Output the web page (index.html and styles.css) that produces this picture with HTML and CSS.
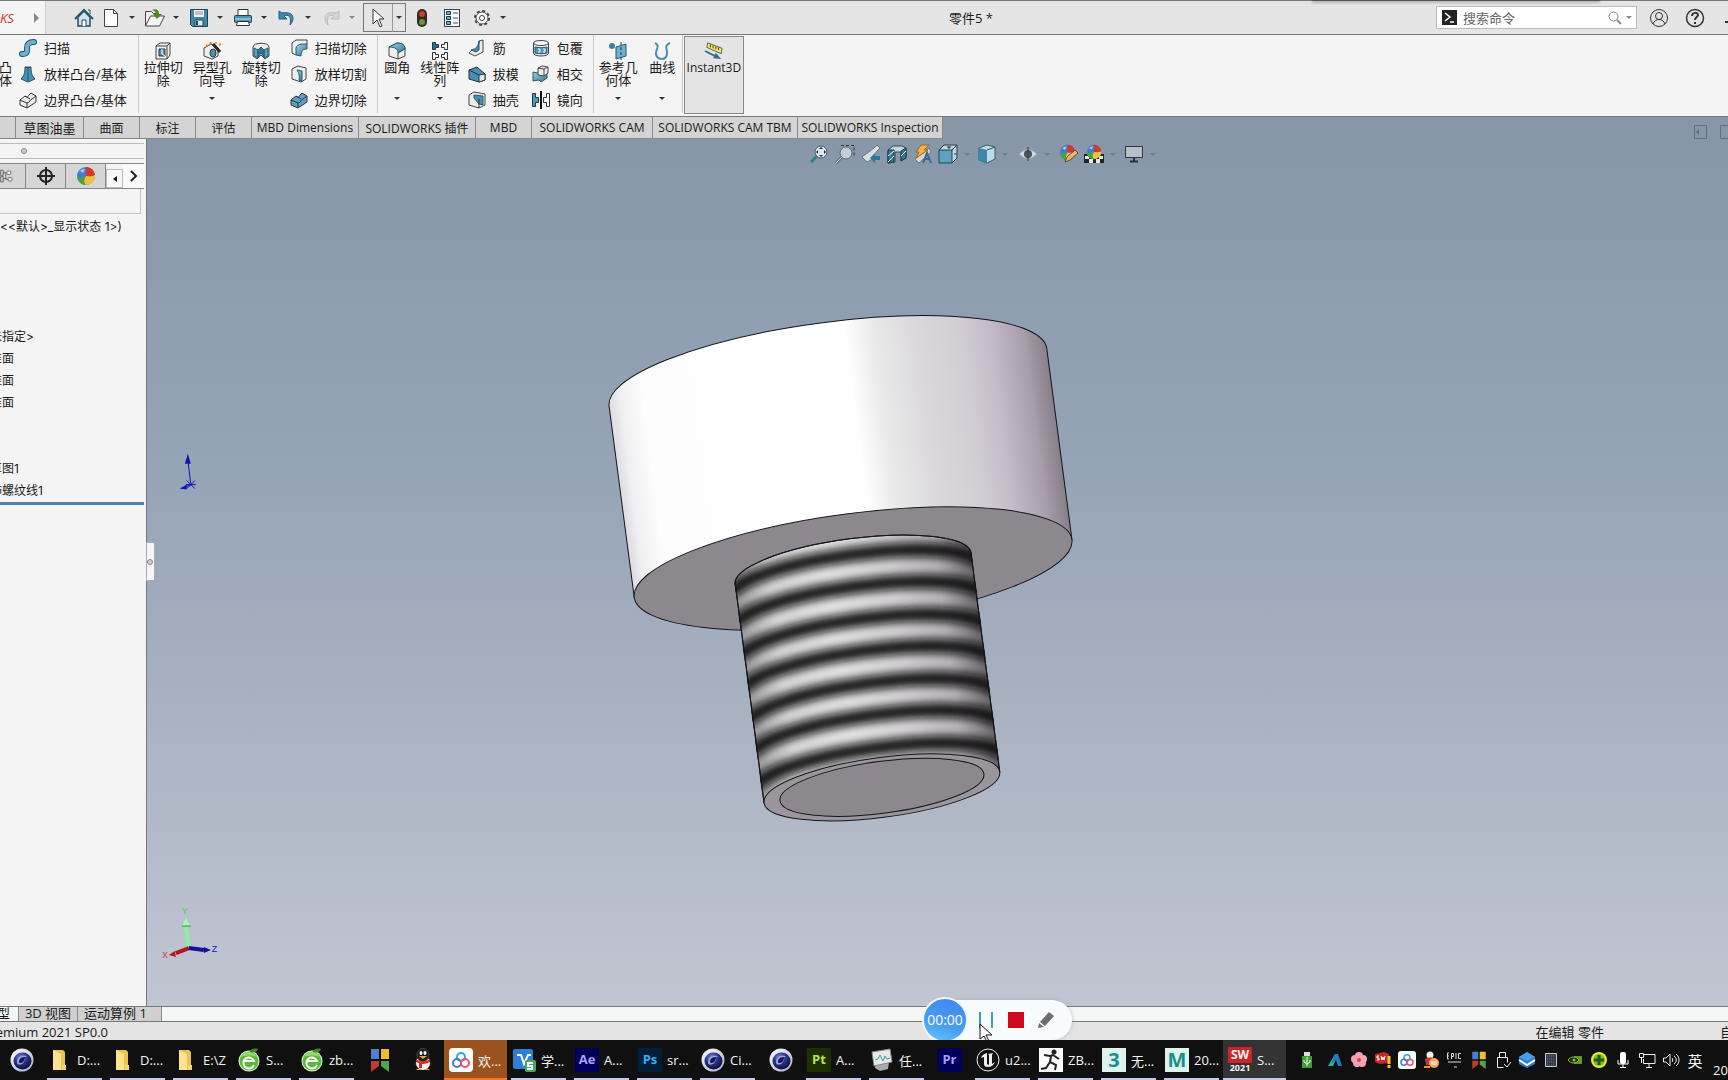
FILE: index.html
```html
<!DOCTYPE html>
<html lang="zh-CN">
<head>
  <meta charset="UTF-8">
  <title>零件5</title>
  <link rel="stylesheet" href="styles.css">
</head>
<body>

  <!-- Ícones usados mais de uma vez -->
  <svg class="sprite" aria-hidden="true">
    <defs>
      <radialGradient id="lens" cx="0.4" cy="0.3" r="0.7">
        <stop offset="0" stop-color="#7c8cd8"/>
        <stop offset="0.5" stop-color="#2a3488"/>
        <stop offset="1" stop-color="#0b1038"/>
      </radialGradient>
      <linearGradient id="chrome" x1="0" y1="0" x2="1" y2="1">
        <stop offset="0" stop-color="#ffffff"/>
        <stop offset="1" stop-color="#a4abc8"/>
      </linearGradient>
      <linearGradient id="blue" x1="0" y1="0" x2="1" y2="1">
        <stop offset="0" stop-color="#a9d3e6"/>
        <stop offset="1" stop-color="#2c7396"/>
      </linearGradient>
    </defs>
    <symbol id="i-c4d" viewBox="0 0 24 24">
      <circle cx="12" cy="12" r="11.500" fill="url(#chrome)"/>
      <ellipse cx="12.500" cy="13" rx="9" ry="8.500" fill="url(#lens)"/>
      <path d="M7 14c0-5 4-7 10-6-3 2-2 6-5 8-3 1-5 1-5-2z" fill="#9aa3de"/>
      <path d="M9 14c0-4 3-5 7-5-2 2-2 6-5 6-1 0-2 0-2-1z" fill="#141a58"/>
    </symbol>
    <symbol id="i-folder" viewBox="0 0 20 24">
      <path d="M3 2h10l2 2v18H3z" fill="#e9c25c"/>
      <path d="M3 2l8 4v16H3z" fill="#fde58e"/>
      <path d="M12 17h4v5h-4z" fill="#f5d477"/>
    </symbol>
    <symbol id="i-browser" viewBox="0 0 24 24">
      <circle cx="12" cy="13" r="10.500" fill="#e4f5da"/>
      <circle cx="12" cy="13" r="9.500" fill="#5ab83a"/>
      <path d="M4 9c3-6 12-7 16 0-5-2-11-2-16 0z" fill="#8fdc68"/>
      <path d="M13 3c1-2 4-3 8-2-1 3-4 4-8 3z" fill="#3b8c28"/>
      <path d="M17 17a5.500 5.500 0 1 1 0-4H7" fill="none" stroke="#fff" stroke-width="2"/>
    </symbol>
    <symbol id="i-cards" viewBox="0 0 20 24">
      <path d="M1 1h8v10H1z" fill="#4b7fd6"/>
      <path d="M11 1h8v10h-8z" fill="#f1bd2e"/>
      <path d="M1 13h8v5l-8 6z" fill="#c5392f"/>
      <path d="M11 13h8v11l-8-6z" fill="#4fa447"/>
    </symbol>
    <symbol id="i-cloud" viewBox="0 0 24 24">
      <rect width="24" height="24" rx="4" fill="#fff"/>
      <circle cx="12" cy="9" r="4" fill="none" stroke="#29a7ee" stroke-width="2"/>
      <circle cx="8" cy="15" r="4" fill="none" stroke="#3c7be8" stroke-width="2"/>
      <circle cx="16" cy="15" r="4" fill="none" stroke="#ea5468" stroke-width="2"/>
    </symbol>
    <symbol id="i-ball" viewBox="0 0 20 20">
      <circle cx="10" cy="10" r="9" fill="#3f7fd0"/>
      <path d="M10 10V1a9 9 0 0 1 9 8c-3 1-6 2-9 1z" fill="#d8352c"/>
      <path d="M10 10c4 1 7 0 9-1a9 9 0 0 1-9 10c-3-3-2-6 0-9z" fill="#efc437"/>
      <path d="M10 10c-2 3-3 6 0 9a9 9 0 0 1-9-8c3 1 6 0 9-1z" fill="#4da143"/>
      <path d="M4 5c2-2 4-2 5-2L7 7z" fill="#fff" opacity="0.600"/>
    </symbol>
    <symbol id="i-surface" viewBox="0 0 18 18">
      <path d="M1 9l5-4c2 2 3 1 4-1l2-2 5 3v6l-9 6-7-3z" stroke="#333" stroke-linejoin="round"/>
      <path d="M1 9l7 3c3 0 3-4 5-4l4-3M8 12v5M6 5l5 3" fill="none" stroke="#333"/>
    </symbol>
  </svg>

  <header class="titlebar">
    <div class="shadow-strip"></div>
    <div class="brand"><span class="brand-name">KS</span><span class="brand-arrow"></span></div>
    <nav class="quick">
      <button class="qbtn" aria-label="主页"><svg width="20" height="20" viewBox="0 0 20 20"><path d="M4 9v9h12V9l-6-6z" fill="#cfe2ec" stroke="#274a5e" stroke-width="1.500"/><path d="M1 11l9-9 9 9" fill="none" stroke="#27556f" stroke-width="2"/><path d="M8 18v-6h4v6M14 2h2v4" fill="#fff" stroke="#274a5e"/></svg></button>
      <div class="split"><button class="qbtn" aria-label="新建"><svg width="20" height="20" viewBox="0 0 20 20"><path d="M3.500 1.500h9l4 4v13h-13z" fill="#fdfdfd" stroke="#444"/><path d="M12.500 1.500v4h4" fill="none" stroke="#444"/></svg></button><button class="caret" aria-label="更多"></button></div>
      <div class="split"><button class="qbtn" aria-label="打开"><svg width="22" height="20" viewBox="0 0 22 20"><path d="M1.500 18V3.500h6l2 2h5V8" fill="#eee" stroke="#444"/><path d="M1.500 18l5-10h14l-5 10z" fill="#f6f6f2" stroke="#444"/><path d="M8 2c4-2 7 0 7 4h3l-5 5-4-5h3c0-2-1-3-4-4z" fill="#4b8a1c"/></svg></button><button class="caret" aria-label="更多"></button></div>
      <div class="split"><button class="qbtn" aria-label="保存"><svg width="20" height="20" viewBox="0 0 20 20"><path d="M1.500 1.500h17v17h-15l-2-2z" fill="#3f86a8" stroke="#1f4255"/><path d="M5 2h10v7H5z" fill="#f3f6f8"/><path d="M6 4h8M6 6h8" stroke="#889"/><path d="M6 12h8v6H6z" fill="#dfe8ec" stroke="#1f4255"/><path d="M8 13v4" stroke="#1f4255" stroke-width="2"/></svg></button><button class="caret" aria-label="更多"></button></div>
      <div class="split"><button class="qbtn" aria-label="打印"><svg width="20" height="20" viewBox="0 0 20 20"><path d="M5 8V1.500h10V8" fill="#fff" stroke="#333"/><rect x="1.500" y="7.500" width="17" height="7" rx="1" fill="#4b94b6" stroke="#1f4255"/><path d="M2 11h16" stroke="#cfe6f0"/><path d="M4.500 13.500h11l1 4h-13z" fill="#fff" stroke="#333"/></svg></button><button class="caret" aria-label="更多"></button></div>
      <div class="split"><button class="qbtn" aria-label="撤消"><svg width="20" height="20" viewBox="0 0 20 20"><path d="M2 3v8h8L7 8c4-2 8 0 6 9 6-7 3-14-8-12z" fill="#3f8cb0" stroke="#235b78" stroke-linejoin="round"/></svg></button><button class="caret" aria-label="更多"></button></div>
      <div class="split"><button class="qbtn" aria-label="重做"><svg width="20" height="20" viewBox="0 0 20 20"><path d="M18 3v8h-8l3-3c-4-2-8 0-6 9-6-7-3-14 8-12z" fill="#d5d5d5" stroke="#bbb" stroke-linejoin="round"/></svg></button><button class="caret dim" aria-label="更多"></button></div>
      <div class="split boxed"><button class="qbtn" aria-label="选择"><svg width="18" height="20" viewBox="0 0 18 20"><path d="M4 1v15l4-4 3 7 2-1-3-7h5z" fill="#fff" stroke="#333" stroke-linejoin="round"/></svg></button><button class="caret" aria-label="更多"></button></div>
    </nav>
    <div class="quick tail">
      <button class="qbtn" aria-label="重建"><svg width="12" height="20" viewBox="0 0 12 20"><rect x="1" y="1" width="10" height="18" rx="5" fill="#332b26"/><circle cx="6" cy="6" r="3" fill="#d13c25"/><circle cx="6" cy="14" r="3" fill="#5c9a44"/></svg></button>
      <button class="qbtn" aria-label="文件属性"><svg width="18" height="20" viewBox="0 0 18 20"><rect x="1.500" y="1.500" width="15" height="17" fill="#fafafa" stroke="#345"/><path d="M3.500 3.500h4v3h-4zM3.500 8.500h4v3h-4zM3.500 13.500h4v3h-4z" fill="#6fb4d4" stroke="#234"/><path d="M10 5h5M10 10h5M10 15h5" stroke="#456"/></svg></button>
      <button class="qbtn" aria-label="选项"><svg width="18" height="18" viewBox="0 0 18 18"><circle cx="9" cy="9" r="7" fill="none" stroke="#444" stroke-width="2" stroke-dasharray="3 2.500"/><circle cx="9" cy="9" r="6" fill="#f4f4f4" stroke="#555"/><circle cx="9" cy="9" r="2.500" fill="#fff" stroke="#444"/></svg></button>
      <button class="caret tight" aria-label="更多"></button>
    </div>
    <h1 class="doc-title">零件5 *</h1>
    <div class="search">
      <svg width="15" height="15" viewBox="0 0 15 15"><rect width="15" height="15" fill="#222"/><path d="M3 3l5 4-5 4M8 12h4" fill="none" stroke="#fff" stroke-width="1.500"/></svg>
      <input type="text" placeholder="搜索命令" aria-label="搜索命令">
      <svg width="14" height="14" viewBox="0 0 14 14"><circle cx="5.500" cy="5.500" r="4.500" fill="none" stroke="#888"/><path d="M9 9l4 4" stroke="#888" stroke-width="2"/></svg>
      <button class="caret dim" aria-label="更多"></button>
    </div>
    <div class="account">
      <button class="qbtn" aria-label="登录"><svg width="20" height="20" viewBox="0 0 20 20" fill="none" stroke="#333"><circle cx="10" cy="10" r="8.500"/><circle cx="10" cy="8" r="3.500"/><path d="M4 16c2-6 10-6 12 0"/></svg></button>
      <button class="qbtn" aria-label="帮助"><svg width="20" height="20" viewBox="0 0 20 20" fill="none" stroke="#333"><circle cx="10" cy="10" r="8.500" stroke-width="1.500"/><path d="M7 8c0-4 6-4 6-1 0 2-3 2-3 5M10 14v2" stroke-width="2"/></svg></button>
      <button class="minimize" aria-label="最小化"></button>
    </div>
  </header>

  <section class="ribbon">
    <div class="big cut"><span class="label">凸<br>体</span></div>
    <div class="stack first">
      <button><svg width="18" height="18" viewBox="0 0 18 18"><path d="M3 15c6 0 5-3 5-6s1-6 7-6" fill="none" stroke="#23556f" stroke-width="6" stroke-linecap="round"/><path d="M3 15c6 0 5-3 5-6s1-6 7-6" fill="none" stroke="#6fb0cf" stroke-width="4" stroke-linecap="round"/></svg>扫描</button>
      <button><svg width="18" height="18" viewBox="0 0 18 18"><path d="M6 2h6c0 6 1 9 4 12l-7 3-7-3c3-3 4-6 4-12z" fill="#4a8fb0" stroke="#24586f"/><path d="M6 2l3 1 3-1M9 3v13" fill="none" stroke="#24586f"/></svg>放样凸台/基体</button>
      <button><svg width="18" height="18" fill="#ececec"><use href="#i-surface"/></svg>边界凸台/基体</button>
    </div>
    <div class="sep"></div>
    <button class="big"><svg width="18" height="18" viewBox="0 0 18 18"><path d="M2 4l4-3h10v12l-3 4H2z" fill="#eee" stroke="#444"/><path d="M2 4h11v13M13 4l3-3" fill="none" stroke="#444"/><path d="M5 7h6v7H5z" fill="#4994b8" stroke="#333"/><path d="M8 7v5l3 2" fill="none" stroke="#fff"/></svg><span class="label">拉伸切除</span></button>
    <button class="big"><svg width="20" height="18" viewBox="0 0 20 18"><path d="M2 6l7-4 7 4v8l-6 3-8-3z" fill="#eee" stroke="#444"/><ellipse cx="11" cy="11" rx="3" ry="4" fill="#4994b8" stroke="#333"/><path d="M11 2l7 8" stroke="#222" stroke-width="3"/><path d="M8 2l1-2M13 1l2-1M17 3l2-1M6 4L4 3" stroke="#e88a2c" stroke-width="2"/></svg><span class="label">异型孔向导</span><i class="drop"></i></button>
    <button class="big"><svg width="20" height="18" viewBox="0 0 20 18"><path d="M2 5c0-5 16-5 16 0v9l-4 3-4-4-4 4-4-3z" fill="#eee" stroke="#444"/><path d="M3 6l4 2v8l-4-2zM17 6l-4 2v8l4-2z" fill="#5ba2c4" stroke="#24586f"/><path d="M7 8l3-3 3 3v7l-3-4-3 4z" fill="#2f7698" stroke="#24586f"/></svg><span class="label">旋转切除</span></button>
    <div class="stack cuts">
      <button><svg width="18" height="18" viewBox="0 0 18 18"><path d="M2 4l4-3h11v4L6 16l-4-2z" fill="#eee" stroke="#444"/><path d="M6 16V9c1-4 5-4 11-4v5c-4 0-6 2-6 7z" fill="url(#blue)" stroke="#24586f"/></svg>扫描切除</button>
      <button><svg width="18" height="18" viewBox="0 0 18 18"><path d="M2 4l6-3 8 2v11l-5 3-9-3z" fill="#eee" stroke="#444"/><path d="M7 5l5 1v11l-3-2c1-3 0-7-2-10z" fill="url(#blue)" stroke="#24586f"/></svg>放样切割</button>
      <button><svg width="18" height="18" fill="#5ba2c4"><use href="#i-surface"/></svg>边界切除</button>
    </div>
    <div class="sep"></div>
    <button class="big narrow"><svg width="20" height="18" viewBox="0 0 20 18"><path d="M2 5l8-4c5 0 8 2 8 6v7l-7 3-9-3z" fill="#eee" stroke="#444"/><path d="M10 1c5 0 8 2 8 6l-7 4c0-4-3-6-9-6z" fill="url(#blue)" stroke="#24586f"/><path d="M11 11v6" stroke="#444"/></svg><span class="label">圆角</span><i class="drop"></i></button>
    <button class="big mid"><svg width="20" height="18" viewBox="0 0 20 18"><path d="M2.500 0.500h3v2h3v3h-3v2h-3z" fill="#2f6f90" stroke="#234"/><path d="M17.500 0.500h-3v2h-3v3h3v2h3zM2.500 10.500h3v2h3v3h-3v2h-3zM17.500 10.500h-3v2h-3v3h3v2h3z" fill="#fafafa" stroke="#333"/></svg><span class="label">线性阵列</span><i class="drop"></i></button>
    <div class="stack features">
      <button><svg width="18" height="18" viewBox="0 0 18 18"><path d="M11 2l4-1v12l-8 4-6-3 3-3h5z" fill="#eee" stroke="#444"/><path d="M11 2c0 5-3 8-8 9l5 2 3-2z" fill="url(#blue)" stroke="#24586f"/></svg>筋</button>
      <button><svg width="18" height="18" viewBox="0 0 18 18"><path d="M1 5l8-3 8 7v6l-6 2-10-3z" fill="#4a8fb0" stroke="#234"/><path d="M11 10l6-1v6l-6 2z" fill="#d9eaf2" stroke="#333"/><path d="M1 5l10 5" stroke="#234"/></svg>拔模</button>
      <button><svg width="18" height="18" viewBox="0 0 18 18"><path d="M1 4l5-3 11 2v11l-6 3L1 14z" fill="#eee" stroke="#444"/><path d="M6 4l9 1v9l-4-1-5-6z" fill="#4a8fb0" stroke="#24586f"/><path d="M11 8v9" stroke="#333"/></svg>抽壳</button>
    </div>
    <div class="stack wraps">
      <button><svg width="18" height="18" viewBox="0 0 18 18"><path d="M1.500 4v10c0 4 15 4 15 0V4" fill="#eee" stroke="#444"/><ellipse cx="9" cy="4" rx="7.500" ry="2.500" fill="#fafafa" stroke="#444"/><path d="M3 8c4 1 8 1 12 0v6c-4 1-8 1-12 0z" fill="#4d98bb" stroke="#24586f"/><path d="M6 10h2v3H6M11 10h2v3h-2" fill="none" stroke="#fff"/></svg>包覆</button>
      <button><svg width="18" height="18" viewBox="0 0 18 18"><path d="M1 7l9 2 5-3v7l-6 4-2-2-6 1z" fill="url(#blue)" stroke="#24586f"/><path d="M6 3l4-2 6 1v6l-4 3-6-1z" fill="#eee" stroke="#444"/><path d="M6 3l6 1v7M12 4l4-2" fill="none" stroke="#444"/></svg>相交</button>
      <button><svg width="18" height="18" viewBox="0 0 18 18"><path d="M0.500 2.500h3v4h3v5h-3v4h-3z" fill="#4d98bb" stroke="#234"/><path d="M17.500 2.500h-3v4h-3v5h3v4h3z" fill="#fafafa" stroke="#333"/><path d="M9 0v18" stroke="#111" stroke-width="2"/></svg>镜向</button>
    </div>
    <div class="sep"></div>
    <button class="big"><svg width="20" height="18" viewBox="0 0 20 18"><circle cx="4" cy="4" r="3" fill="#3d7f9f"/><path d="M8 5l10-3v12L8 17z" fill="#6fb0cf" stroke="#24586f"/><path d="M13 0v18" stroke="#234" stroke-dasharray="3 2"/></svg><span class="label">参考几何体</span><i class="drop"></i></button>
    <button class="big narrow"><svg width="20" height="18" viewBox="0 0 20 18"><path d="M3 1c6 3 0 7 1 11 1 6 10 7 11 0 1-5-4-8 3-11" fill="none" stroke="#4c8fae" stroke-width="2"/></svg><span class="label">曲线</span><i class="drop"></i></button>
    <div class="sep"></div>
    <button class="big instant"><svg width="22" height="18" viewBox="0 0 22 20"><path d="M4 1l16 6-1 6L3 6z" fill="#f5e36b" stroke="#554"/><path d="M7 3v3M10 4v3M13 5v3M16 6v3" stroke="#332"/><path d="M1 10l12 6" stroke="#2f6f90" stroke-width="2"/><path d="M13 12l6 7-9-1z" fill="#2f6f90"/></svg><span class="label">Instant3D</span></button>
  </section>

  <div class="workspace">
    <nav class="tabs">
      <button class="w-edge"></button>
      <button class="w-wide">草图油墨</button>
      <button class="w-short">曲面</button>
      <button class="w-short">标注</button>
      <button class="w-short">评估</button>
      <button class="w-dim">MBD Dimensions</button>
      <button class="w-addin">SOLIDWORKS 插件</button>
      <button class="w-short">MBD</button>
      <button class="w-cam">SOLIDWORKS CAM</button>
      <button class="w-tbm">SOLIDWORKS CAM TBM</button>
      <button class="w-tbm">SOLIDWORKS Inspection</button>
      <div class="doc-controls">
        <svg width="13" height="14" viewBox="0 0 13 14"><path d="M0.500 0.500h12v13H0.500z" fill="none" stroke="#5f7083"/><path d="M5 4v6L2 7z" fill="#5f7083"/></svg>
        <svg width="13" height="14" viewBox="0 0 13 14"><path d="M0.500 0.500h12v13H0.500z" fill="none" stroke="#5f7083"/></svg>
      </div>
    </nav>

    <div class="main">
      <aside class="panel">
        <div class="grip"><i></i></div>
        <div class="panel-tabs">
          <button class="pt-first" aria-label="配置"><svg width="20" height="20" viewBox="0 0 20 20" fill="none" stroke="#333"><path d="M1 1h4v8H1zM1 11h4v8H1zM5 5h5M5 14h4M9 5v10h4"/><rect x="10.500" y="2.500" width="6" height="5" rx="1" fill="#fff"/><rect x="12.500" y="12.500" width="6" height="5" rx="1" fill="#fff"/></svg></button>
          <button aria-label="尺寸"><svg width="18" height="18" viewBox="0 0 18 18" fill="none" stroke="#222" stroke-width="2"><circle cx="9" cy="9" r="6"/><path d="M9 0v18M0 9h18"/></svg></button>
          <button aria-label="外观"><svg width="20" height="20"><use href="#i-ball"/></svg></button>
          <button class="pt-back" aria-label="上一个"></button>
          <button class="pt-next" aria-label="下一个"><svg width="8" height="12" viewBox="0 0 8 12"><path d="M1 1l5 5-5 5" fill="none" stroke="#222" stroke-width="2"/></svg></button>
        </div>
        <div class="filter"></div>
        <ul class="tree">
          <li class="root">&lt;&lt;默认&gt;_显示状态 1&gt;)</li>
          <li></li><li></li><li></li><li></li>
          <li>未指定&gt;</li>
          <li>准面</li>
          <li>准面</li>
          <li>准面</li>
          <li></li><li></li>
          <li>草图1</li>
          <li>饰螺纹线1</li>
        </ul>
        <div class="rollback"></div>
      </aside>

      <div class="viewport">
        <button class="collapse" aria-label="折叠"><i></i></button>

        <!-- Peça: cabeça cilíndrica e haste com rosca -->
        <svg class="model" viewBox="147 138 1581 868" preserveAspectRatio="xMidYMid meet">
          <defs>
            <linearGradient id="head" x1="-222" x2="222" y1="0" y2="0" gradientUnits="userSpaceOnUse">
              <stop offset="0" stop-color="#dcdadd"/>
              <stop offset="0.030" stop-color="#f0eff1"/>
              <stop offset="0.080" stop-color="#fdfdfd"/>
              <stop offset="0.550" stop-color="#ffffff"/>
              <stop offset="0.610" stop-color="#ebebeb"/>
              <stop offset="0.700" stop-color="#dcdadd"/>
              <stop offset="0.810" stop-color="#d2cdd4"/>
              <stop offset="0.870" stop-color="#c6bcca"/>
              <stop offset="0.950" stop-color="#a79dab"/>
              <stop offset="1" stop-color="#857d86"/>
            </linearGradient>
            <linearGradient id="shank" x1="-120" x2="120" y1="0" y2="0" gradientUnits="userSpaceOnUse">
              <stop offset="0" stop-color="#a4a4a4"/>
              <stop offset="0.150" stop-color="#dadada"/>
              <stop offset="0.400" stop-color="#e6e6e6"/>
              <stop offset="0.650" stop-color="#d6d4d6"/>
              <stop offset="0.850" stop-color="#bcb5bd"/>
              <stop offset="1" stop-color="#6f6a70"/>
            </linearGradient>
            <clipPath id="shank-clip"><path d="M-120 0A120 30 0 0 1 120 0V222A120 30 0 0 0 -120 222z"/></clipPath>
            <filter id="soft" filterUnits="userSpaceOnUse" x="-150" y="-60" width="300" height="320"><feGaussianBlur stdDeviation="5"/></filter>
            <path id="thread" d="M-126 12A126 26 0 0 1 126 12"/>
          </defs>
          <g transform="translate(853 568) rotate(-7.500)" stroke="#15151a">
            <path d="M-221 -193A221 55 0 0 1 221 -193V0H-221z" fill="url(#head)"/>
            <ellipse rx="221" ry="55" fill="#8d888e"/>
            <path d="M-119 0A119 30 0 0 1 119 0V221H-119z" fill="url(#shank)"/>
            <g clip-path="url(#shank-clip)">
              <g fill="none" stroke="#101010" stroke-width="14" filter="url(#soft)">
                <use href="#thread"/>
                <use href="#thread" y="32"/>
                <use href="#thread" y="65"/>
                <use href="#thread" y="97"/>
                <use href="#thread" y="130"/>
                <use href="#thread" y="162"/>
                <use href="#thread" y="195"/>
              </g>
            </g>
            <path d="M-119 221V0A119 30 0 0 1 119 0V221" fill="none"/>
            <ellipse cy="221" rx="119" ry="30" fill="#9a969b"/>
            <ellipse cy="221" rx="103" ry="26" fill="#8d888e"/>
          </g>
          <!-- Origem do esboço -->
          <g stroke="#1212b4" fill="#1212b4">
            <path d="M190 484l-3-24M190 484l-10 4M186 480l8 8M194 480l-8 8M185 484h10" fill="none"/>
            <path d="M187 453l3 10h-6zM179 488l7-4v5z" stroke="none"/>
          </g>
          <!-- Tríade de eixos -->
          <path d="M188 948l-3-22" stroke="#8df0a0" stroke-width="4"/>
          <path d="M185 918l5 9h-9z" fill="#a8f5b5"/>
          <path d="M181 926h9" stroke="#2c8a3c"/>
          <path d="M188 948l-13 5" stroke="#b3141c" stroke-width="4"/>
          <path d="M168 955l6-4 1 6z" fill="#b3141c"/>
          <path d="M188 948l15 2" stroke="#10109a" stroke-width="4"/>
          <path d="M210 950l-7-3v6z" fill="#10109a"/>
          <g class="axis">
            <text x="181" y="914" fill="#4fc468">Y</text>
            <text x="161" y="958" fill="#cf3b46">X</text>
            <text x="211" y="952" fill="#1a1aa8">Z</text>
          </g>
        </svg>

        <div class="hud">
          <button aria-label="整屏显示"><svg width="20" height="20" viewBox="0 0 20 20"><path d="M2 18l7-7" stroke="#2d7f93" stroke-width="3"/><circle cx="12" cy="8" r="6" fill="#dbe6ee" stroke="#45586a"/><path d="M12 3l2 2h-4zM12 13l2-2h-4zM7 8l2-2v4zM17 8l-2-2v4z" fill="#234"/></svg></button>
          <button aria-label="局部放大"><svg width="20" height="20" viewBox="0 0 20 20"><path d="M6 1.500h13v12" fill="none" stroke="#333" stroke-dasharray="3 2"/><path d="M1 19l7-7" stroke="#4e7f92" stroke-width="3"/><path d="M1 19l7-7" stroke="#b4cad4"/><circle cx="11" cy="9" r="6" fill="#c3ced8" stroke="#56687a"/></svg></button>
          <button aria-label="上一视图"><svg width="20" height="20" viewBox="0 0 20 20"><path d="M1 13L13 4l3-3 3 3-3 3-6 9-4 2z" fill="#d8dde0" stroke="#6b7680"/><path d="M9 14l5-5v3h5v4h-5v3z" fill="#32739a"/></svg></button>
          <button aria-label="剖面视图"><svg width="20" height="20" viewBox="0 0 20 20"><path d="M1 6l5-4h9l4 2v9l-5 4V8H8v10l-7 1z" fill="#c8d6de" stroke="#345"/><path d="M1 6h6v12l-6 1zM14 7l5-3v10l-5 3z" fill="#2e7c8c" stroke="#234"/><path d="M1 12l6-5M1 18l6-6M14 12l5-5" stroke="#dfe"/></svg></button>
          <button aria-label="动态注解"><svg width="20" height="20" viewBox="0 0 20 20"><path d="M2 15L16 4l2 4-12 11z" fill="#d6d6cc" stroke="#777"/><path d="M8 1h8l-5 5h4L3 14l3-6H3z" fill="#f0b348" stroke="#9a6b1e"/><path d="M10 19l4-10 4 10M12 15h5" fill="none" stroke="#3d6698" stroke-width="2"/></svg></button>
          <button class="gap-c" aria-label="视图定向"><svg width="20" height="20" viewBox="0 0 20 20"><path d="M1 6l5-5h13v13l-5 5" fill="#c3d3dc" stroke="#2b3a48"/><path d="M1 6h13v13H1z" fill="#5ba2bd" stroke="#1f4658"/><path d="M14 6l5-5M16 10h3M11 2v3M9 3h4" stroke="#2b3a48"/></svg><i class="faint"></i></button>
          <button class="gap-c" aria-label="显示样式"><svg width="18" height="20" viewBox="0 0 18 20"><path d="M1 4l8-3 8 2v12l-8 4-8-3z" fill="#bcdbe6" stroke="#345c70"/><path d="M1 4l8 2v13l-8-3z" fill="#3b89a6"/><path d="M9 6l8-3" stroke="#345c70"/></svg><i class="faint"></i></button>
          <button class="gap-c" aria-label="隐藏"><svg width="20" height="20" viewBox="0 0 20 20"><path d="M1 10c5-6 13-6 18 0-5 6-13 6-18 0z" fill="#d3dade" stroke="#9aa6b0"/><circle cx="10" cy="10" r="4" fill="#47525c"/><path d="M10 3v5M10 12v5" stroke="#333"/></svg><i class="faint"></i></button>
          <button aria-label="编辑外观"><svg width="20" height="20" viewBox="0 0 20 20"><use href="#i-ball" width="17" height="17"/><path d="M6 18l2-5 8-7 3 3-8 7z" fill="#e9b57d" stroke="#6b4a28"/></svg></button>
          <button class="gap-c" aria-label="应用布景"><svg width="20" height="20" viewBox="0 0 20 20"><path d="M0 10h20v9H0z" fill="#222"/><path d="M1 12h4v3H1zM15 12h4v3h-4zM5 15h4v4H5zM12 15h4v4h-4z" fill="#e8e8e8"/><use href="#i-ball" x="2" width="16" height="16"/></svg><i class="faint"></i></button>
          <button class="gap-c" aria-label="视图设定"><svg width="20" height="20" viewBox="0 0 20 20"><path d="M1.500 2.500h17v11h-17z" fill="#b6c0ca" stroke="#333"/><path d="M10 14v3M6 17.500h8" stroke="#234" stroke-width="2"/></svg><i class="faint"></i></button>
        </div>
      </div>
    </div>
  </div>

  <div class="sheet-tabs">
    <button class="active">型</button>
    <button class="s-view">3D 视图</button>
    <button class="s-motion">运动算例 1</button>
  </div>

  <footer class="status">
    <span class="version">Premium 2021 SP0.0</span>
    <span class="mode">在编辑 零件</span>
    <span class="unit">自</span>

    <div class="recorder">
      <span class="clock">00:00</span>
      <button class="pause" aria-label="暂停"></button>
      <button class="stop" aria-label="停止"></button>
      <button class="pen" aria-label="画笔"><svg width="18" height="18" viewBox="0 0 18 18" fill="#6e6e70"><path d="M12 1l5 4-9 10-5-4zM2 12l5 4-6 1z"/></svg></button>
      <svg class="pointer" width="14" height="20" viewBox="0 0 14 20"><path d="M1 1v15l4-3 3 6 2-1-3-6h6z" fill="#fff" stroke="#111"/></svg>
    </div>
  </footer>

  <nav class="taskbar">
    <button class="app solo"><svg width="24" height="24"><use href="#i-c4d"/></svg></button>
    <button class="app open"><svg width="20" height="24"><use href="#i-folder"/></svg><span>D:...</span></button>
    <button class="app open"><svg width="20" height="24"><use href="#i-folder"/></svg><span>D:...</span></button>
    <button class="app open"><svg width="20" height="24"><use href="#i-folder"/></svg><span>E:\Z</span></button>
    <button class="app open"><svg width="24" height="24"><use href="#i-browser"/></svg><span>S...</span></button>
    <button class="app open"><svg width="24" height="24"><use href="#i-browser"/></svg><span>zb...</span></button>
    <button class="app solo"><svg width="20" height="24"><use href="#i-cards"/></svg></button>
    <button class="app solo"><svg width="20" height="24" viewBox="0 0 20 24"><path d="M3 12c-2 2-3 5-2 6l3-2zM17 12c2 2 3 5 2 6l-3-2z" fill="#222"/><ellipse cx="10" cy="15" rx="7" ry="7" fill="#f5f5f5"/><ellipse cx="10" cy="7" rx="6" ry="6.500" fill="#1c1c1c" stroke="#444"/><ellipse cx="8" cy="5" rx="1.500" ry="2" fill="#fff"/><ellipse cx="12" cy="5" rx="1.500" ry="2" fill="#fff"/><path d="M6 8h8l-4 3z" fill="#f0a61f"/><path d="M3 11c4 3 10 3 14 0v3c-4 2-7 2-8 2v4H6v-5l-3-1z" fill="#d92c2c"/><path d="M3 22c2-2 5-1 6 0zM11 22c2-2 5-1 6 0z" fill="#f0a61f"/></svg></button>
    <button class="app open alert"><svg width="24" height="24"><use href="#i-cloud"/></svg><span>欢...</span></button>
    <button class="app open"><svg width="24" height="24" viewBox="0 0 24 24"><rect x="1" y="1" width="20" height="20" rx="2" fill="#2b7fd4"/><path d="M5 7h4l3 9 4-9h3" fill="none" stroke="#fff" stroke-width="2"/><rect x="13" y="12" width="11" height="12" rx="2" fill="#49ab5a"/><path d="M21 15h-5v3h4v3h-5" fill="none" stroke="#fff" stroke-width="2"/></svg><span>学...</span></button>
    <button class="app open"><b class="adobe ae">Ae</b><span>A...</span></button>
    <button class="app open"><b class="adobe ps">Ps</b><span>sr...</span></button>
    <button class="app open"><svg width="24" height="24"><use href="#i-c4d"/></svg><span>Ci...</span></button>
    <button class="app solo"><svg width="24" height="24"><use href="#i-c4d"/></svg></button>
    <button class="app open"><b class="adobe pt">Pt</b><span>A...</span></button>
    <button class="app open"><svg width="24" height="24" viewBox="0 0 24 24"><path d="M6 8h14l-2 13-8 2-5-3z" fill="#a8acae"/><path d="M2 4l18-3 2 13-18 4z" fill="#e6e9ea" stroke="#888"/><path d="M5 12l3-1 2-4 3 6 2-5 2 3 3-1" fill="none" stroke="#3aa0a0"/></svg><span>任...</span></button>
    <button class="app solo"><b class="adobe pr">Pr</b></button>
    <button class="app open"><svg width="24" height="24" viewBox="0 0 24 24"><circle cx="12" cy="12" r="11" fill="#111" stroke="#eee"/><path d="M5 10c1-3 3-4 6-5v11l2 1V7l-1-1 5-1-1 2v9l3-2c-1 3-4 5-7 5s-4-1-4-3V9z" fill="#eee"/></svg><span>u2...</span></button>
    <button class="app open"><svg width="24" height="24" viewBox="0 0 24 24"><rect width="24" height="24" fill="#fafafa"/><circle cx="15" cy="4" r="2.500" fill="#222"/><path d="M5 7l6 1 3-1 6 4M12 8l-1 6 6 3-1 5M11 14l-4 6-5 1" fill="none" stroke="#222" stroke-width="2"/></svg><span>ZB...</span></button>
    <button class="app open"><b class="tile">3</b><span>无...</span></button>
    <button class="app open"><b class="tile">M</b><span>20...</span></button>
    <button class="app open current"><b class="sw">SW<small>2021</small></b><span>S...</span></button>

    <div class="tray">
      <svg width="18" height="18" viewBox="0 0 18 18"><path d="M6 1h6v4H6z" fill="#ddd"/><path d="M4 5h10v12H4z" fill="#3f9c3a"/><path d="M9 6v9M6 9v2l3 2 3-2V9" fill="none" stroke="#fff"/></svg>
      <svg width="18" height="18" viewBox="0 0 18 18"><path d="M2 15L9 3l3 0-5 12z" fill="#2fb59a"/><path d="M9 3h3l4 12h-4l-2-6-5 4z" fill="#2577c2"/></svg>
      <svg width="18" height="18" viewBox="0 0 18 18" fill="#f3a3b0"><circle cx="9" cy="5" r="4"/><circle cx="5" cy="8" r="4"/><circle cx="13" cy="8" r="4"/><circle cx="7" cy="12" r="4"/><circle cx="12" cy="12" r="4"/><circle cx="9" cy="9" r="2" fill="#d8405c"/></svg>
      <svg width="18" height="18" viewBox="0 0 18 18"><path d="M1 3l9-2 5 2v9l-9 1-5-2z" fill="#c42a2a"/><path d="M5 5H3v2h2v2H3M7 5l1 4 1-3 1 3 1-4" fill="none" stroke="#fff"/><path d="M15 5v8M15 14v3" stroke="#f6c51f" stroke-width="3"/></svg>
      <svg width="18" height="18"><use href="#i-cloud"/></svg>
      <svg width="18" height="18" viewBox="0 0 18 18"><circle cx="8" cy="4" r="3.500" fill="#eee"/><path d="M3 8c3-2 8-2 10 0l-1 6H4z" fill="#c9372c"/><circle cx="12" cy="12" r="5" fill="#f0a764"/><path d="M9 11h6M9 13h6" stroke="#fff"/><path d="M2 15h6v2H2z" fill="#e59a2c"/></svg>
      <svg width="18" height="18" viewBox="0 0 18 18" fill="none" stroke="#ddd"><path d="M3 2H1.500v6H3M1.500 5H3M5.500 8V2.500h2v3h-2M10 2v6M15 2.500h-2.500v5H15M2 11h13M8 16h3"/></svg>
      <svg width="18" height="18"><use href="#i-cards"/></svg>
      <svg width="18" height="18" viewBox="0 0 18 18" fill="none" stroke="#eee"><path d="M5.500 1.500h6v5h-6zM3.500 6.500h10v5M3.500 6.500v10h6M10 13l3 3 4-5"/></svg>
      <svg width="18" height="18" viewBox="0 0 18 18"><path d="M1 6l8-5 8 5v7l-8 4-8-4z" fill="#2a7bd0"/><path d="M1 6l8-5 8 5-8 4z" fill="#4d9be4"/><path d="M1 9l8 5 8-5" fill="none" stroke="#fff" stroke-width="2"/></svg>
      <svg width="18" height="18" viewBox="0 0 18 18"><path d="M3.500 2.500h11v13h-11z" fill="#333b4a" stroke="#ccc"/><path d="M5 5h8M5 8h8M5 11h8M5 14h8" stroke="#6a7690" stroke-dasharray="1 1"/></svg>
      <svg width="18" height="18" viewBox="0 0 18 18"><path d="M8 5h8v8H8z" fill="#5f9a1c"/><path d="M2 9c3-4 8-4 11 0-3 4-8 4-11 0z" fill="#1c2410" stroke="#8fc43c"/><circle cx="8" cy="9" r="1.500" fill="#8fc43c"/></svg>
      <svg width="18" height="18" viewBox="0 0 18 18"><circle cx="9" cy="9" r="8" fill="#f2e52c"/><path d="M3 9a6 6 0 0 1 12 0 6 6 0 0 1-12 0z" fill="#7dbb2c"/><path d="M9 4v10M4 9h10" stroke="#1f5a1c" stroke-width="3"/></svg>
      <svg width="18" height="18" viewBox="0 0 18 18"><rect x="6" y="1" width="6" height="12" rx="2" fill="#fff"/><path d="M4 9v4h10V9M9 13v4M6 16.500h6" fill="none" stroke="#fff"/></svg>
      <svg width="18" height="18" viewBox="0 0 18 18" fill="none" stroke="#eee"><path d="M6 3.500h11v9H5.500V8M1.500 2.500h4v4h-4zM11 13v3M8 16.500h6M3.500 7v5"/></svg>
      <svg width="18" height="18" viewBox="0 0 18 18" fill="none" stroke="#eee"><path d="M1.500 7v4H4l4 4V3L4 7zM10 7c1 1 1 3 0 4M12 5c3 2 3 6 0 8M14 3c4 3 4 9 0 12"/></svg>
      <span class="ime">英</span>
    </div>
    <span class="date">202</span>
  </nav>

</body>
</html>
```
FILE: styles.css
```css
* {
  box-sizing: border-box;
}

body {
  margin: 0;
  height: 100vh;
  display: flex;
  flex-direction: column;
  overflow: hidden;
  font-family: "Open Sans", "Noto Sans CJK SC", sans-serif;
  font-size: 13px;
  color: #1a1a1a;
  background: #e4e4e4;
}

button {
  margin: 0;
  padding: 0;
  border: none;
  background: none;
  font: inherit;
  color: inherit;
}

.sprite {
  position: absolute;
  width: 0;
  height: 0;
}

/* Barra de título */
.titlebar {
  position: relative;
  flex: none;
  display: flex;
  align-items: center;
  height: 35px;
  background: #e5e5e5;
  border-top: 1px solid #777;
  border-bottom: 1px solid #777;
}

.shadow-strip {
  position: absolute;
  top: -1px;
  right: 128px;
  width: 288px;
  height: 1px;
  background: #555;
  box-shadow: 0 1px 3px rgba(0, 0, 0, 0.6);
}

.brand {
  display: flex;
  align-items: center;
  justify-content: space-between;
  width: 46px;
  height: 100%;
  padding-right: 6px;
  background: #f5f5f5;
  border-right: 1px solid #ccc;
}

.brand-name {
  color: #d2322d;
  font-style: italic;
}

.brand-arrow {
  border: 5px solid transparent;
  border-left-color: #888;
  border-right: none;
}

.quick {
  display: flex;
  align-items: center;
  gap: 3px;
  margin-left: 26px;
}

.quick.tail {
  gap: 6px;
  margin-left: 4px;
}

.qbtn {
  display: flex;
  align-items: center;
  justify-content: center;
  width: 24px;
  height: 28px;
}

.split {
  display: flex;
  align-items: center;
}

.split.boxed {
  width: 43px;
  height: 29px;
  border: 1px solid #777;
}

.boxed .qbtn {
  width: 29px;
  border-right: 1px solid #999;
}

.caret {
  display: flex;
  justify-content: center;
  width: 17px;
}

.caret::after,
.drop::after {
  content: "";
  border: 3px solid transparent;
  border-top-color: #333;
  border-bottom: none;
}

.caret.dim::after {
  border-top-color: #888;
}

.boxed .caret {
  width: 12px;
}

.caret.tight {
  width: 6px;
}

.doc-title {
  flex: 1;
  margin: 0;
  text-align: center;
  font-size: 13px;
  font-weight: normal;
}

.search {
  display: flex;
  align-items: center;
  width: 201px;
  height: 23px;
  padding-left: 5px;
  background: #fff;
  border: 1px solid #bbb;
}

.search input {
  flex: 1;
  min-width: 0;
  padding: 0 6px;
  border: none;
  outline: none;
  font: inherit;
}

.search input::placeholder {
  color: #666;
}

.search .caret {
  width: 14px;
}

.account {
  display: flex;
  align-items: center;
  gap: 12px;
  width: 91px;
  padding-left: 10px;
  overflow: hidden;
}

.account button {
  flex: none;
}

.minimize {
  width: 10px;
  height: 10px;
  margin-left: 6px;
  border-bottom: 2px solid #333;
}

/* Faixa de comandos */
.ribbon {
  flex: none;
  display: flex;
  height: 81px;
  background: #f4f4f4;
  line-height: 13px;
}

.big {
  display: flex;
  flex-direction: column;
  align-items: center;
  width: 49px;
  padding-top: 7px;
}

.big svg {
  flex: none;
}

.big .label {
  width: 40px;
  height: 46px;
  padding-top: 1px;
  text-align: center;
}

.big.narrow {
  width: 39px;
}

.big.mid {
  width: 46px;
}

.big.cut {
  width: 12px;
  padding-top: 25px;
  align-items: flex-end;
  overflow: hidden;
}

.big.cut .label {
  width: 13px;
}

.big.instant {
  width: 60px;
  height: 78px;
  margin: 1px;
  padding-top: 5px;
  background: #e4e4e4;
  border: 1px solid #888;
}

.big.instant .label {
  width: auto;
  font-size: 12px;
}

.stack {
  display: flex;
  flex-direction: column;
}

.stack.first { padding: 0 11px 0 7px; }
.stack.cuts { padding: 0 10px 0 4px; }
.stack.features { padding-left: 5px; }
.stack.wraps { padding: 0 10px 0 13px; }

.stack button {
  display: flex;
  align-items: center;
  gap: 7px;
  height: 26px;
}

.sep {
  width: 1px;
  height: 78px;
  background: #ccc;
}

/* Abas */
.workspace {
  flex: 1;
  min-height: 0;
  display: flex;
  flex-direction: column;
  border-top: 1px solid #777;
  background: linear-gradient(#8696a8, #96a4b7 40%, #aab4c2 70%, #c2c6d3);
}

.tabs {
  flex: none;
  display: flex;
  height: 22px;
  font-size: 12px;
}

.tabs button {
  flex: none;
  background: #d4d4d4;
  border-right: 1px solid #888;
  border-bottom: 1px solid #888;
}

.tabs .w-edge { width: 16px; }
.tabs .w-wide { width: 68px; font-size: 13px; }
.tabs .w-short { width: 56px; }
.tabs .w-dim { width: 107px; }
.tabs .w-addin { width: 117px; }
.tabs .w-cam { width: 121px; }
.tabs .w-tbm { width: 145px; }

.doc-controls {
  display: flex;
  align-items: center;
  gap: 13px;
  width: 34px;
  margin-left: auto;
  padding-top: 7px;
  overflow: hidden;
}

.doc-controls svg {
  flex: none;
}

.main {
  flex: 1;
  min-height: 0;
  display: flex;
}

/* Painel da árvore */
.panel {
  width: 147px;
  flex: none;
  background: #f4f4f4;
  border-right: 1px solid #777;
}

.grip {
  height: 16px;
  margin: 4px 2px 4px 0;
  padding: 4px 0 0 21px;
  border-top: 1px solid #bbb;
  border-bottom: 1px solid #bbb;
}

.grip i,
.collapse i {
  display: block;
  width: 6px;
  height: 6px;
  border: 1px solid #888;
  border-radius: 50%;
  background: #ccc;
}

.panel-tabs {
  display: flex;
  align-items: center;
  height: 26px;
  margin-right: 2px;
  border-top: 1px solid #888;
  border-bottom: 1px solid #888;
}

.panel-tabs button {
  display: flex;
  align-items: center;
  justify-content: center;
  width: 40px;
  height: 100%;
  background: #d6d6d6;
  border-right: 1px solid #888;
}

.panel-tabs .pt-first {
  width: 26px;
  padding-right: 12px;
}

.panel-tabs .pt-back {
  width: 17px;
  height: 19px;
  align-self: flex-end;
  background: #f7f7f7;
  border: 1px solid #bbb;
}

.pt-back::after {
  content: "";
  border: 3px solid transparent;
  border-right: 4px solid #111;
  border-left: none;
}

.panel-tabs .pt-next {
  flex: 1;
  background: #fafafa;
  border: none;
}

.filter {
  height: 25px;
  margin: 0 5px 2px 0;
  border: 1px solid #c4c4c4;
  border-left: none;
  border-top: none;
}

.tree {
  list-style: none;
  margin: 0 0 0 -10px;
  padding: 0;
  font-family: Inter, "Noto Sans CJK SC", sans-serif;
  font-size: 12px;
  line-height: 22px;
  white-space: nowrap;
}

.tree li {
  height: 22px;
}

.tree .root {
  padding-left: 10px;
}

.rollback {
  height: 3px;
  margin-right: 2px;
  background: #4a86a5;
}

/* Área gráfica */
.viewport {
  flex: 1;
  position: relative;
}

.model {
  display: block;
  width: 100%;
  height: 100%;
}

.axis {
  font: 9px "Liberation Sans", sans-serif;
}

.collapse {
  position: absolute;
  left: -1px;
  top: 403px;
  display: flex;
  align-items: center;
  width: 9px;
  height: 39px;
  background: #f6f6f6;
  border: 1px solid #aaa;
}

.hud {
  position: absolute;
  top: 5px;
  left: 660px;
  display: flex;
  gap: 2px;
}

.hud button {
  display: flex;
  align-items: center;
  justify-content: center;
  width: 24px;
  height: 20px;
}

.hud .gap-c {
  width: 38px;
  gap: 6px;
  justify-content: flex-start;
  padding-left: 1px;
}

.faint {
  border: 3px solid transparent;
  border-top-color: #6d7d90;
  border-bottom: none;
}

/* Abas inferiores e barra de status */
.sheet-tabs {
  flex: none;
  display: flex;
  height: 15px;
  background: #f5f6f6;
  border-top: 1px solid #777;
  line-height: 12px;
}

.sheet-tabs button {
  padding-bottom: 2px;
  background: #d0d0d0;
  border-right: 1px solid #888;
}

.sheet-tabs .active {
  display: flex;
  justify-content: flex-end;
  width: 19px;
  padding-right: 8px;
  background: #f5f6f6;
}

.sheet-tabs .s-view { width: 59px; }
.sheet-tabs .s-motion { width: 84px; padding-right: 8px; }

.status {
  position: relative;
  flex: none;
  display: flex;
  align-items: center;
  height: 19px;
  padding-top: 2px;
  border-top: 1px solid #777;
  background: #e4e4e4;
  line-height: 16px;
  white-space: nowrap;
}

.status .version {
  display: flex;
  justify-content: flex-end;
  width: 108px;
  overflow: hidden;
}

.status .mode {
  margin-left: auto;
  margin-right: 116px;
}

.status .unit {
  width: 8px;
  overflow: hidden;
}

/* Gravador flutuante */
.recorder {
  position: absolute;
  left: 922px;
  bottom: -3px;
  display: flex;
  align-items: center;
  width: 150px;
  height: 46px;
}

.recorder::before {
  content: "";
  position: absolute;
  left: 20px;
  right: 0;
  top: 3px;
  height: 40px;
  border-radius: 0 20px 20px 0;
  background: #f8fbfd;
  box-shadow: 0 0 4px rgba(120, 150, 170, 0.5);
}

.recorder > * {
  position: relative;
  flex: none;
}

.clock {
  width: 46px;
  height: 46px;
  border: 2px solid #eef8ff;
  border-radius: 50%;
  background: linear-gradient(200deg, #3f86ee, #4a9cf2 60%, #6ac8fa);
  color: #fff;
  font-size: 14px;
  line-height: 42px;
  text-align: center;
}

.pause {
  width: 14px;
  height: 16px;
  margin-left: 11px;
  border-left: 2px solid #35a5b5;
  border-right: 2px solid #35a5b5;
}

.stop {
  width: 16px;
  height: 16px;
  margin-left: 15px;
  background: #cf0a1e;
}

.pen {
  height: 18px;
  margin-left: 13px;
}

.recorder .pointer {
  position: absolute;
  left: 57px;
  top: 26px;
}

/* Barra de tarefas */
.taskbar {
  position: relative;
  flex: none;
  display: flex;
  height: 40px;
  background: #101010;
  color: #f2f2f2;
  font-size: 13px;
  overflow: hidden;
}

.app {
  position: relative;
  flex: none;
  display: flex;
  align-items: center;
  gap: 5px;
  width: 63px;
  padding: 0 5px;
  overflow: hidden;
  white-space: nowrap;
}

.app svg,
.app b {
  flex: none;
}

.app svg[width="20"] {
  margin: 0 2px;
}

.app.solo {
  justify-content: center;
  width: 43px;
}

.app.open::after {
  content: "";
  position: absolute;
  left: 4px;
  right: 4px;
  bottom: 0;
  height: 2px;
  background: #c5cbe6;
}

.app.alert {
  background: #9a531e;
}

.app.alert::after {
  left: 0;
  right: 0;
  background: #f5761e;
}

.app.current {
  background: #333;
}

.app.current::after {
  left: 0;
  right: 0;
}

.adobe {
  width: 24px;
  height: 24px;
  line-height: 23px;
  text-align: center;
  font-size: 13px;
}

.ae, .pr { background: #00005b; color: #a9a0ff; }
.ps { background: #001e36; color: #3fa8f5; }
.pt { background: #1f2f04; color: #b5e63a; }

.tile {
  width: 24px;
  height: 24px;
  background: #def2ee;
  color: #16908c;
  font-size: 20px;
  line-height: 23px;
  text-align: center;
}

.sw {
  display: flex;
  flex-direction: column;
  width: 24px;
  height: 26px;
  background: linear-gradient(#cf2328 60%, transparent 60%);
  font-size: 12px;
  line-height: 16px;
  text-align: center;
}

.sw small {
  font-size: 9px;
  line-height: 10px;
}

.tray {
  display: flex;
  align-items: center;
  gap: 6px;
  margin-left: auto;
  margin-right: 9px;
}

.tray svg:first-child {
  margin-right: 4px;
}

.ime {
  width: 18px;
  font-size: 15px;
  text-align: center;
}

.date {
  align-self: flex-end;
  width: 15px;
  overflow: hidden;
  line-height: 20px;
}
```
